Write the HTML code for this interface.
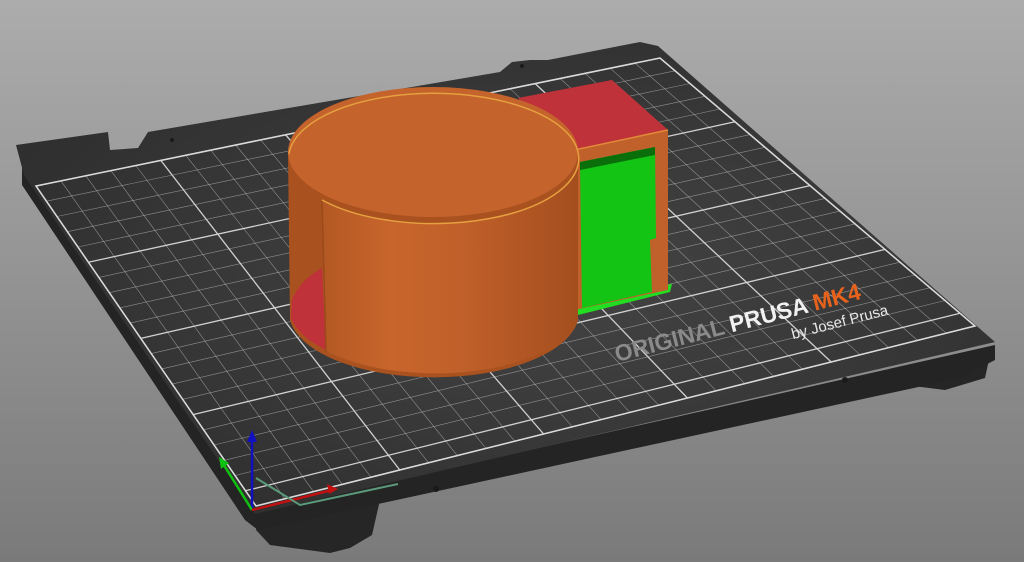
<!DOCTYPE html>
<html><head><meta charset="utf-8"><style>
html,body{margin:0;padding:0;width:1024px;height:562px;overflow:hidden;background:linear-gradient(#ababab,#7b7b7b);}
svg{display:block}
</style></head><body>
<svg id="s" width="1024" height="562" viewBox="0 0 1024 562" xmlns="http://www.w3.org/2000/svg">
<defs>
<linearGradient id="bg" x1="0" y1="0" x2="0" y2="1"><stop offset="0" stop-color="#acacac"/><stop offset="1" stop-color="#7a7a7a"/></linearGradient>
<radialGradient id="bed" cx="0.55" cy="0.5" r="0.6"><stop offset="0" stop-color="#444"/><stop offset="1" stop-color="#2f2f2f"/></radialGradient>
<linearGradient id="cyl" gradientUnits="userSpaceOnUse" x1="288" y1="0" x2="578" y2="0"><stop offset="0" stop-color="#a9521f"/><stop offset="0.35" stop-color="#c8652c"/><stop offset="0.6" stop-color="#c0602a"/><stop offset="1" stop-color="#a44e1e"/></linearGradient>
</defs>
<rect width="1024" height="562" fill="url(#bg)"/>
<polygon points="258,515 380,500 372,535 350,548 330,553 270,545 256,530" fill="#262626"/>
<polygon points="890,370 990,355 985,378 945,390 905,385" fill="#262626"/>
<polygon points="22,168 255,512 995,345 995,360 960,378 258,530 245,520 22,185" fill="#242424"/>
<polygon id="bedtop" points="16,145 108,132 110,150 138,148 148,132 500,72 512,62 530,60 548,60 640,42 658,46 995,342 255,514 24,175" fill="url(#bed)"/>
<g id="grid" stroke="#d9d9d9" fill="none"></g>
<g transform="translate(617,362) rotate(-14.5)" font-family="Liberation Sans, sans-serif" font-weight="bold" font-size="23">
<text x="0" y="0" fill="#8a8a8a">ORIGINAL <tspan fill="#f2f2f2">PRUSA</tspan> <tspan fill="#e8621c">MK4</tspan></text>
<text x="176" y="22" fill="#e8e8e8" font-weight="normal" font-size="15">by Josef Prusa</text>
</g>
<circle cx="436" cy="489" r="3" fill="#1a1a1a"/><circle cx="845" cy="380" r="3" fill="#1a1a1a"/>
<circle cx="172" cy="140" r="2" fill="#1a1a1a"/><circle cx="522" cy="66" r="2" fill="#1a1a1a"/>
<polygon points="560,302 672,284 670,292 566,318" fill="#22dd22"/>
<polygon points="518,98 612,80 668,130 565,152" fill="#c0323a"/>
<polygon points="565,152 668,130 668,290 565,312" fill="#c0602a"/>
<polygon points="580,162 655,147 656,238 650,240 652,292 582,308" fill="#14c414"/>
<polygon points="580,162 655,147 655,155 580,170" fill="#0a6f0a"/>
<line x1="565" y1="152" x2="668" y2="130" stroke="#e08a3a" stroke-width="1.5"/>
<path d="M288,152 L290,320 A145,65 0 0 0 578,320 L578,152 Z" fill="#a9521f"/>
<ellipse cx="433" cy="152" rx="145" ry="65" fill="#c4632c"/>
<path d="M289,154 A145,65 0 0 1 578,152" fill="none" stroke="#e5a040" stroke-width="1.5"/>
<path d="M322,200 A145,65 0 0 0 578,152 L578,320 A145,65 0 0 1 324,350 Z" fill="url(#cyl)"/>
<path d="M291,318 A145,65 0 0 0 326,350 L322,268 Q300,280 292,300 Z" fill="#c0323a"/>
<path d="M322,200 L326,352" stroke="#9a4a1a" stroke-width="1.5"/>
<path d="M322,200 A145,65 0 0 0 578,152" fill="none" stroke="#e6a040" stroke-width="1.5"/>
<g stroke-width="2.5" fill="none">
<line x1="252" y1="510" x2="252" y2="440" stroke="#1010c0"/>
<line x1="252" y1="510" x2="222" y2="462" stroke="#10c010"/>
<line x1="252" y1="510" x2="332" y2="490" stroke="#c01010"/>
<polyline points="256,478 300,505 398,484" stroke="#5a9a7a" stroke-width="2"/>
</g>
<polygon points="252,430 247,442 257,442" fill="#1010c0"/>
<polygon points="219,457 221,469 229,463" fill="#10c010"/>
<polygon points="338,489 327,484 329,494" fill="#c01010"/>
</svg>
<script>
(function(){
var g=document.getElementById('grid');
var TL=[36,186],TR=[660,58],BR=[975,326],BL=[256,506];
function P(u,v){var x=(1-u)*(1-v)*TL[0]+u*(1-v)*TR[0]+u*v*BR[0]+(1-u)*v*BL[0];
var y=(1-u)*(1-v)*TL[1]+u*(1-v)*TR[1]+u*v*BR[1]+(1-u)*v*BL[1];return [x,y];}
var s='';var NU=25,NV=21;
function L(a,b,w,o){s+='<line x1="'+a[0].toFixed(1)+'" y1="'+a[1].toFixed(1)+'" x2="'+b[0].toFixed(1)+'" y2="'+b[1].toFixed(1)+'" stroke-width="'+w+'" stroke-opacity="'+o+'"/>';}
for(var i=0;i<=NU;i++){var u=i/NU;var m=(i%5==0);L(P(u,0),P(u,1),m?1.3:0.6,m?0.95:0.55);}
for(var j=0;j<=NV;j++){var v=j/NV;var m=(j%5==0)||j==NV;L(P(0,v),P(1,v),m?1.3:0.6,m?0.95:0.55);}
var a=P(0,0),b=P(1,0),c=P(1,1),d=P(0,1);
s+='<polygon points="'+[a,b,c,d].map(function(p){return p.join(',')}).join(' ')+'" stroke-width="1.5"/>';
g.innerHTML=s;
})();
</script>
</body></html>
